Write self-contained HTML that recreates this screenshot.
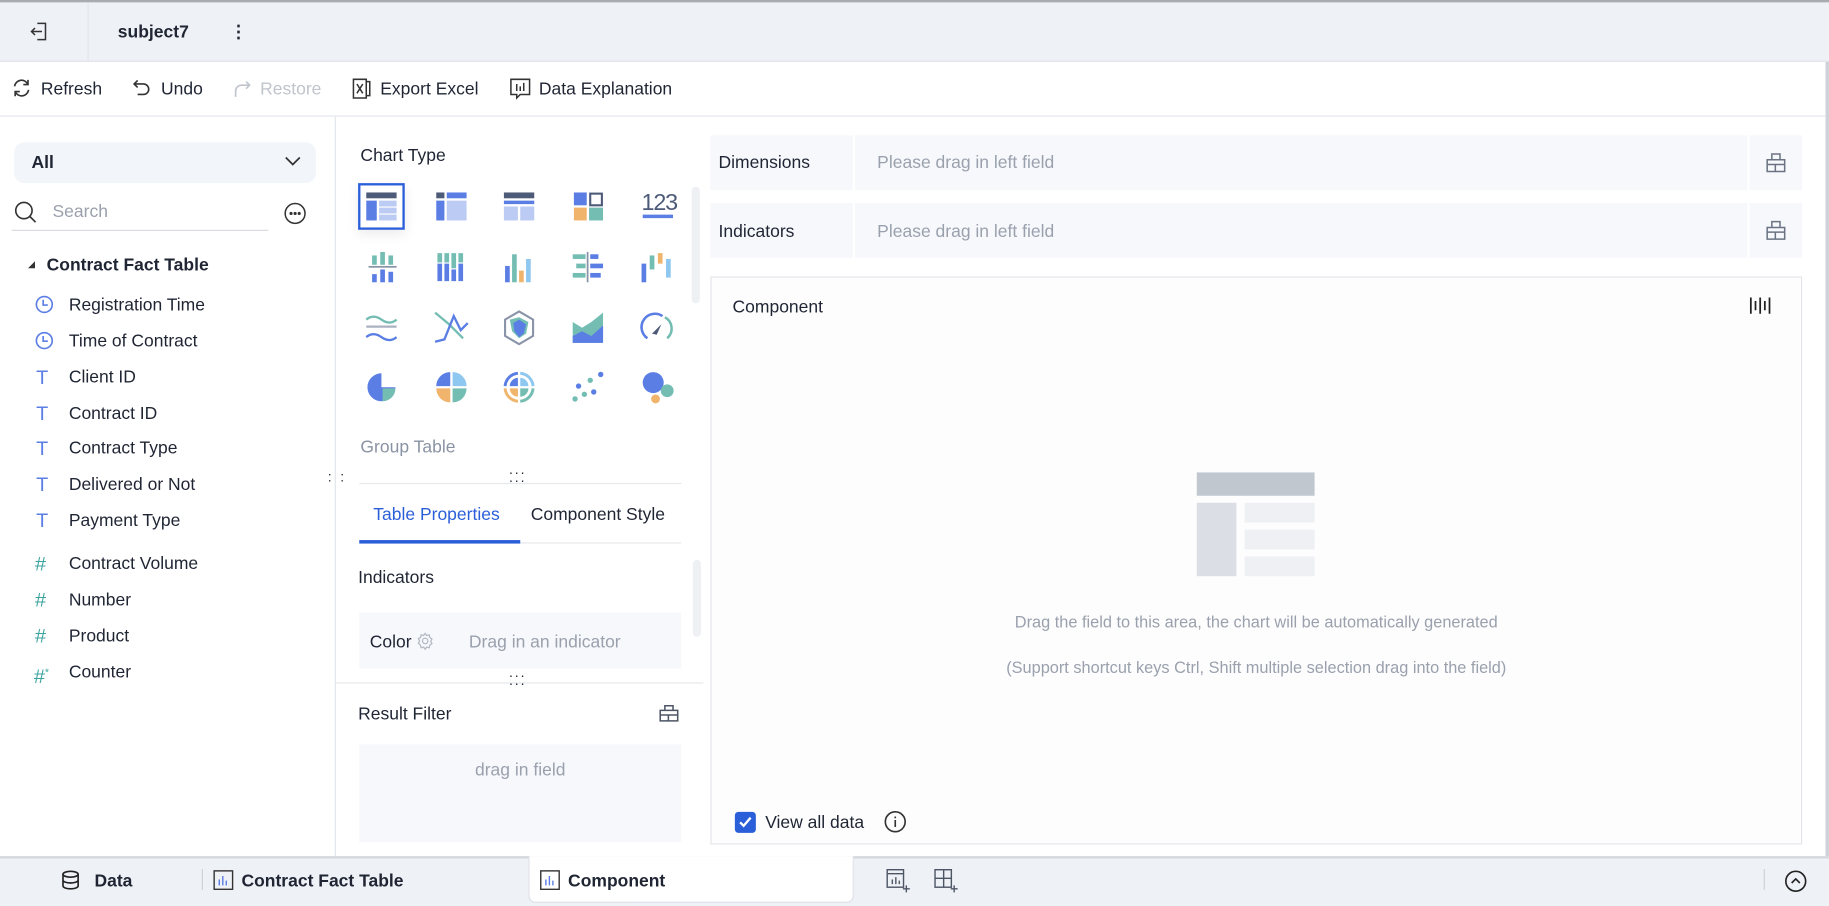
<!DOCTYPE html>
<html><head><meta charset="utf-8">
<style>
*{box-sizing:border-box;margin:0;padding:0}
html,body{width:1829px;height:906px;overflow:hidden;background:#fff}
#w{position:absolute;left:0;top:0;width:1568px;height:777px;transform:scale(1.16645);transform-origin:0 0;font-family:"Liberation Sans",sans-serif;color:#1f2533;font-size:15px}
.a{position:absolute}
.t{position:absolute;white-space:nowrap;line-height:18px;margin-top:1px}
.i{position:absolute;white-space:nowrap;line-height:18px;margin-top:1px}
.g{color:#9aa1ad}
svg{position:absolute;overflow:visible}
</style></head><body><div id="w">
<div class="a" style="left:0;top:0;width:1568px;height:53px;background:#eef1f6;border-top:2px solid #a9abb0;border-bottom:1px solid #e0e3e8"></div>
<div class="a" style="left:75px;top:2px;width:1px;height:51px;background:#e2e5ea"></div>
<svg style="left:25px;top:18px" width="18" height="18" viewBox="0 0 18 18" fill="none" stroke="#333" stroke-width="1.3"><path d="M7 2h7v14H7M11 9H2M5 6L2 9l3 3"/></svg>
<div class="t" style="left:101px;top:18px;font-weight:bold;font-size:15px">subject7</div>
<div class="t" style="left:197px;top:18px;font-weight:bold">⋮</div>
<div class="a" style="left:0;top:99px;width:1568px;height:1px;background:#e3e6eb"></div>
<svg style="left:10px;top:67px" width="17" height="17" viewBox="0 0 17 17" fill="none" stroke="#333" stroke-width="1.4"><path d="M2.5 7A6 6 0 0 1 14 5.5M14.5 10A6 6 0 0 1 3 11.5M14 1.5v4h-4M3 15.5v-4h4"/></svg>
<div class="t" style="left:35px;top:67px">Refresh</div>
<svg style="left:113px;top:67px" width="17" height="17" viewBox="0 0 17 17" fill="none" stroke="#333" stroke-width="1.4"><path d="M5 2L2 5l3 3M2 5h8a4.5 4.5 0 0 1 0 9H5"/></svg>
<div class="t" style="left:138px;top:67px">Undo</div>
<svg style="left:199px;top:68px" width="17" height="17" viewBox="0 0 17 17" fill="none" stroke="#c0c4cc" stroke-width="1.4"><path d="M12 2l3 3-3 3M15 5H8a5 5 0 0 0-5 5v5"/></svg>
<div class="t" style="left:223px;top:67px;color:#c0c4cc">Restore</div>
<svg style="left:302px;top:67px" width="17" height="18" viewBox="0 0 17 18" fill="none" stroke="#333" stroke-width="1.3"><path d="M1 1h11v16H1zM12 3h3v12h-3M4 5l5 8M9 5l-5 8"/></svg>
<div class="t" style="left:326px;top:67px">Export Excel</div>
<svg style="left:437px;top:67px" width="18" height="19" viewBox="0 0 18 19" fill="none" stroke="#333" stroke-width="1.3"><path d="M1 1h16v13H9l-3 3v-3H1zM6 5v6M9 7v4M12 4v7"/></svg>
<div class="t" style="left:462px;top:67px">Data Explanation</div>
<div class="a" style="left:1565px;top:53px;width:3px;height:682px;background:#cfd2d8"></div>
<div class="a" style="left:287px;top:100px;width:1px;height:634px;background:#e3e6eb"></div>
<div class="a" style="left:12px;top:122px;width:259px;height:35px;background:#f2f5fa;border-radius:9px"></div>
<div class="t" style="left:27px;top:130px;font-weight:bold">All</div>
<svg style="left:244px;top:134px" width="14" height="9" viewBox="0 0 14 9" fill="none" stroke="#333" stroke-width="1.5"><path d="M1 1l6 6 6-6"/></svg>
<svg style="left:12px;top:172px" width="20" height="20" viewBox="0 0 20 20" fill="none" stroke="#333" stroke-width="1.4"><circle cx="8.5" cy="8.5" r="7"/><path d="M13.5 13.5l5 5"/></svg>
<div class="t g" style="left:45px;top:172px">Search</div>
<div class="a" style="left:10px;top:197px;width:220px;height:1px;background:#d8dbe1"></div>
<svg style="left:243px;top:173px" width="20" height="20" viewBox="0 0 20 20" fill="none" stroke="#333" stroke-width="1.3"><circle cx="10" cy="10" r="8.5"/><circle cx="6.5" cy="10" r=".7" fill="#333"/><circle cx="10" cy="10" r=".7" fill="#333"/><circle cx="13.5" cy="10" r=".7" fill="#333"/></svg>
<svg style="left:24px;top:223px" width="7" height="7" viewBox="0 0 7 7"><path d="M0 7L6 1v6z" fill="#333"/></svg>
<div class="t" style="left:40px;top:218px;font-weight:bold">Contract Fact Table</div>
<svg style="left:30px;top:253px" width="16" height="16" viewBox="0 0 16 16" fill="none" stroke="#5b7ee5" stroke-width="1.4"><circle cx="8" cy="8" r="6.8"/><path d="M7 4v4.5h4"/></svg>
<div class="t" style="left:59px;top:252px">Registration Time</div>
<svg style="left:30px;top:284px" width="16" height="16" viewBox="0 0 16 16" fill="none" stroke="#5b7ee5" stroke-width="1.4"><circle cx="8" cy="8" r="6.8"/><path d="M7 4v4.5h4"/></svg>
<div class="t" style="left:59px;top:283px">Time of Contract</div>
<div class="i" style="left:31px;top:314px;color:#5b7ee5;font-size:17px">T</div><div class="t" style="left:59px;top:314px">Client ID</div>
<div class="i" style="left:31px;top:345px;color:#5b7ee5;font-size:17px">T</div><div class="t" style="left:59px;top:345px">Contract ID</div>
<div class="i" style="left:31px;top:375px;color:#5b7ee5;font-size:17px">T</div><div class="t" style="left:59px;top:375px">Contract Type</div>
<div class="i" style="left:31px;top:406px;color:#5b7ee5;font-size:17px">T</div><div class="t" style="left:59px;top:406px">Delivered or Not</div>
<div class="i" style="left:31px;top:437px;color:#5b7ee5;font-size:17px">T</div><div class="t" style="left:59px;top:437px">Payment Type</div>
<div class="i" style="left:30px;top:474px;color:#3aa3a0;font-size:17px">#</div><div class="t" style="left:59px;top:474px">Contract Volume</div>
<div class="i" style="left:30px;top:505px;color:#3aa3a0;font-size:17px">#</div><div class="t" style="left:59px;top:505px">Number</div>
<div class="i" style="left:30px;top:536px;color:#3aa3a0;font-size:17px">#</div><div class="t" style="left:59px;top:536px">Product</div>
<div class="i" style="left:29px;top:566px;color:#3aa3a0;font-size:17px">#<sup style="font-size:9px">*</sup></div><div class="t" style="left:59px;top:567px">Counter</div>
<div class="t" style="left:281px;top:404px;font-size:12px;letter-spacing:2px;line-height:8px">: :</div>
<div class="t" style="left:309px;top:124px">Chart Type</div>
<div class="a" style="left:593px;top:160px;width:7px;height:100px;background:#eef0f3;border-radius:4px"></div>
<div class="a" style="left:307px;top:157px;width:40px;height:40px;border:2px solid #2b5fd9;box-shadow:0 4px 10px rgba(0,0,0,.08)"></div>
<svg style="left:314px;top:165px" width="26" height="24"><rect x="0" y="0" width="26" height="5" fill="#4d5b78"/><rect x="0" y="7" width="9" height="17" fill="#5b7ee5"/><rect x="11" y="7" width="15" height="5" fill="#bccbf3"/><rect x="11" y="13" width="15" height="5" fill="#bccbf3"/><rect x="11" y="19" width="15" height="5" fill="#bccbf3"/></svg>
<svg style="left:374px;top:165px" width="26" height="24"><rect x="0" y="0" width="7" height="5" fill="#4d5b78"/><rect x="9" y="0" width="17" height="5" fill="#5b7ee5"/><rect x="0" y="7" width="7" height="17" fill="#5b7ee5"/><rect x="9" y="7" width="17" height="17" fill="#bccbf3"/></svg>
<svg style="left:432px;top:165px" width="26" height="24"><rect x="0" y="0" width="26" height="5" fill="#4d5b78"/><rect x="0" y="7" width="26" height="3" fill="#5b7ee5"/><rect x="0" y="12" width="12" height="12" fill="#bccbf3"/><rect x="14" y="12" width="12" height="12" fill="#bccbf3"/></svg>
<svg style="left:492px;top:165px" width="26" height="24"><rect x="0" y="0" width="11" height="11" fill="#5b7ee5"/><rect x="14" y="1" width="10" height="10" fill="none" stroke="#4d5b78" stroke-width="1.8"/><rect x="0" y="13" width="11" height="11" fill="#f0b46c"/><rect x="13" y="13" width="12" height="11" fill="#74bdb3"/></svg>
<div class="t" style="left:550px;top:164px;font-size:20px;color:#4d5b78;letter-spacing:-1px">123</div>
<div class="a" style="left:551px;top:184px;width:26px;height:3px;background:#5b7ee5"></div>
<svg style="left:316px;top:216px" width="24" height="26"><rect x="3" y="3" width="4" height="8" fill="#74bdb3"/><rect x="10" y="0" width="4" height="11" fill="#74bdb3"/><rect x="17" y="3" width="4" height="8" fill="#74bdb3"/><rect x="0" y="12" width="24" height="1.5" fill="#8a94a8"/><rect x="3" y="19" width="4" height="7" fill="#5b7ee5"/><rect x="10" y="15" width="4" height="11" fill="#5b7ee5"/><rect x="17" y="17" width="4" height="9" fill="#5b7ee5"/></svg>
<svg style="left:375px;top:217px" width="24" height="24"><g fill="#5b7ee5"><rect x="0" y="9" width="4" height="15"/><rect x="6" y="9" width="4" height="15"/><rect x="12" y="14" width="4" height="10"/><rect x="18" y="9" width="4" height="15"/></g><g fill="#74bdb3"><rect x="0" y="0" width="4" height="8"/><rect x="6" y="0" width="4" height="8"/><rect x="12" y="0" width="4" height="13"/><rect x="18" y="0" width="4" height="8"/></g></svg>
<svg style="left:433px;top:218px" width="24" height="24"><rect x="0" y="10" width="4" height="14" fill="#5b7ee5"/><rect x="6" y="0" width="4" height="24" fill="#74bdb3"/><rect x="12" y="14" width="4" height="10" fill="#f0b46c"/><rect x="18" y="4" width="4" height="20" fill="#8ec7ef"/></svg>
<svg style="left:491px;top:216px" width="26" height="26"><rect x="0" y="2" width="11" height="4" fill="#74bdb3"/><rect x="3" y="10" width="8" height="4" fill="#74bdb3"/><rect x="0" y="18" width="11" height="4" fill="#74bdb3"/><rect x="12" y="0" width="1.5" height="26" fill="#8a94a8"/><rect x="15" y="2" width="7" height="4" fill="#5b7ee5"/><rect x="15" y="10" width="11" height="4" fill="#5b7ee5"/><rect x="15" y="18" width="9" height="4" fill="#5b7ee5"/></svg>
<svg style="left:550px;top:217px" width="26" height="26"><rect x="0" y="9" width="4" height="16" fill="#5b7ee5"/><rect x="7" y="2" width="4" height="12" fill="#74bdb3"/><rect x="14" y="0" width="4" height="9" fill="#f0b46c"/><rect x="21" y="5" width="4" height="16" fill="#8ec7ef"/></svg>
<svg style="left:314px;top:268px" width="26" height="24" fill="none" stroke-width="2"><path d="M0 6q6-5 13 0t13 0" stroke="#74bdb3"/><path d="M0 12h26" stroke="#aab2c2"/><path d="M0 21q6-5 13 0t13 0" stroke="#5b7ee5"/></svg>
<svg style="left:373px;top:268px" width="28" height="26" fill="none" stroke-width="2"><path d="M0 0l12 10 12 12" stroke="#74bdb3"/><path d="M0 25l8-2 8-20 6 12 6-6" stroke="#5b7ee5"/></svg>
<svg style="left:431px;top:266px" width="28" height="30"><path d="M14 1l12 7v14l-12 7-12-7V8z" fill="none" stroke="#8a94a8" stroke-width="1.8"/><path d="M14 6l8 4-2 10-6 4-6-6-2-10z" fill="#74bdb3"/><path d="M14 8l6 4-2 8-4 3-4-5-1-7z" fill="#5b7ee5"/></svg>
<svg style="left:491px;top:268px" width="26" height="26"><path d="M0 8l8 5 8-5 10-8v26H0z" fill="#74bdb3"/><path d="M0 20l8-4 8 4 10-9v15H0z" fill="#5b7ee5"/></svg>
<svg style="left:550px;top:268px" width="26" height="26" fill="none" stroke-width="2.2"><path d="M5 22A11 11 0 0 1 18 3" stroke="#5b7ee5"/><path d="M20 4A11 11 0 0 1 22 22" stroke="#74bdb3"/><path d="M9 18l8-8-4 9z" fill="#4d5b78"/></svg>
<svg style="left:314px;top:319px" width="26" height="26"><path d="M13 13V1A12 12 0 1 0 25 13z" fill="#5b7ee5"/><path d="M14 14h11a11 11 0 0 1-11 11z" fill="#74bdb3"/></svg>
<svg style="left:374px;top:319px" width="26" height="26"><path d="M12 0v12H0A12 12 0 0 1 12 0z" fill="#5b7ee5"/><path d="M14 0a12 12 0 0 1 12 12H14z" fill="#8ec7ef"/><path d="M12 14v12A12 12 0 0 1 0 14z" fill="#f0b46c"/><path d="M14 14h12a12 12 0 0 1-12 12z" fill="#74bdb3"/></svg>
<svg style="left:432px;top:319px" width="26" height="26" fill="none" stroke-width="2.5"><path d="M12 1A12 12 0 0 0 1 12" stroke="#5b7ee5"/><path d="M14 1a12 12 0 0 1 11 11" stroke="#8ec7ef"/><path d="M1 14a12 12 0 0 0 11 11" stroke="#f0b46c"/><path d="M14 25a12 12 0 0 0 11-11" stroke="#74bdb3"/><path d="M12 5v7H5a7 7 0 0 1 7-7z" fill="#5b7ee5" stroke="none"/><path d="M14 5a7 7 0 0 1 7 7h-7z" fill="#8ec7ef" stroke="none"/><path d="M12 14v7a7 7 0 0 1-7-7z" fill="#f0b46c" stroke="none"/><path d="M14 14h7a7 7 0 0 1-7 7z" fill="#74bdb3" stroke="none"/></svg>
<svg style="left:491px;top:319px" width="26" height="26"><g fill="#5b7ee5"><circle cx="24" cy="2" r="2.3"/><circle cx="5" cy="12" r="2.3"/><circle cx="18" cy="17" r="2.3"/></g><g fill="#74bdb3"><circle cx="15" cy="7" r="2.3"/><circle cx="10" cy="19" r="2.3"/><circle cx="2" cy="23" r="2.3"/></g></svg>
<svg style="left:550px;top:318px" width="28" height="28"><circle cx="10" cy="10" r="9" fill="#5b7ee5"/><circle cx="22" cy="17" r="5.5" fill="#74bdb3"/><circle cx="12" cy="24" r="3.8" fill="#f0b46c"/></svg>
<div class="t" style="left:309px;top:374px;color:#8a93a3">Group Table</div>
<div class="a" style="left:308px;top:414px;width:276px;height:1px;background:#e5e7eb"></div>
<div class="t" style="left:436px;top:401px;font-size:12px;letter-spacing:1px;line-height:7px">&middot;&middot;&middot;<br>&middot;&middot;&middot;</div>
<div class="t" style="left:320px;top:432px;color:#2b5fd9">Table Properties</div>
<div class="t" style="left:455px;top:432px">Component Style</div>
<div class="a" style="left:308px;top:465px;width:276px;height:1px;background:#e5e7eb"></div>
<div class="a" style="left:308px;top:463px;width:138px;height:3px;background:#2b5fd9"></div>
<div class="t" style="left:307px;top:486px">Indicators</div>
<div class="a" style="left:594px;top:480px;width:7px;height:66px;background:#eef0f3;border-radius:4px"></div>
<div class="a" style="left:308px;top:525px;width:276px;height:48px;background:#f6f8fc"></div>
<div class="t" style="left:317px;top:541px">Color</div>
<svg style="left:357px;top:542px" width="15" height="15" viewBox="0 0 15 15" fill="none" stroke="#b5bac4" stroke-width="1.1"><circle cx="7.5" cy="7.5" r="2.3"/><path d="M7.5 1l1.3 1.8 2.2-.5.5 2.2 1.8 1.3-1 2 1 2-1.8 1.3-.5 2.2-2.2-.5-1.3 1.8-1.3-1.8-2.2.5-.5-2.2L1.7 9.5l1-2-1-2L3.5 4.5 4 2.3l2.2.5z"/></svg>
<div class="t g" style="left:402px;top:541px">Drag in an indicator</div>
<div class="a" style="left:288px;top:585px;width:315px;height:1px;background:#e5e7eb"></div>
<div class="t" style="left:436px;top:575px;font-size:12px;letter-spacing:1px;line-height:7px">&middot;&middot;&middot;<br>&middot;&middot;&middot;</div>
<div class="t" style="left:307px;top:603px">Result Filter</div>
<svg style="left:565px;top:604px" width="17" height="15" viewBox="0 0 17 15" fill="none" stroke="#4d5565" stroke-width="1.3"><path d="M1 5h15v9H1zM5 5V1h7v4M1 9h15M8 9v5"/></svg>
<div class="a" style="left:308px;top:638px;width:276px;height:84px;background:#f6f8fc"></div>
<div class="t g" style="left:308px;top:651px;width:276px;text-align:center">drag in field</div>
<div class="a" style="left:609px;top:116px;width:936px;height:47px;background:#f6f8fc"></div>
<div class="a" style="left:731px;top:116px;width:2px;height:47px;background:#fff"></div>
<div class="a" style="left:1498px;top:116px;width:2px;height:47px;background:#fff"></div>
<div class="t" style="left:616px;top:130px">Dimensions</div>
<div class="t g" style="left:752px;top:130px">Please drag in left field</div>
<svg style="left:1514px;top:131px" width="17" height="17" viewBox="0 0 17 17" fill="none" stroke="#6b7383" stroke-width="1.3"><path d="M1 6h15v10H1zM5 6V1h7v5M1 10h15M8 10v6"/></svg>
<div class="a" style="left:609px;top:174px;width:936px;height:47px;background:#f6f8fc"></div>
<div class="a" style="left:731px;top:174px;width:2px;height:47px;background:#fff"></div>
<div class="a" style="left:1498px;top:174px;width:2px;height:47px;background:#fff"></div>
<div class="t" style="left:616px;top:189px">Indicators</div>
<div class="t g" style="left:752px;top:189px">Please drag in left field</div>
<svg style="left:1514px;top:189px" width="17" height="17" viewBox="0 0 17 17" fill="none" stroke="#6b7383" stroke-width="1.3"><path d="M1 6h15v10H1zM5 6V1h7v5M1 10h15M8 10v6"/></svg>
<div class="a" style="left:609px;top:237px;width:936px;height:487px;border:1px solid #e3e5ea;background:#fdfdfe"></div>
<div class="t" style="left:628px;top:254px">Component</div>
<svg style="left:1500px;top:254px" width="18" height="16" viewBox="0 0 18 16" stroke="#222" stroke-width="1.5"><path d="M1 1v14M5 4v8M9 1v14M13 4v8M17 1v14"/></svg>
<div class="a" style="left:1026px;top:405px;width:101px;height:20px;background:#c1c7cf"></div>
<div class="a" style="left:1026px;top:431px;width:34px;height:63px;background:#dbdfe5"></div>
<div class="a" style="left:1067px;top:431px;width:60px;height:17px;background:#eef0f4"></div>
<div class="a" style="left:1067px;top:454px;width:60px;height:17px;background:#eef0f4"></div>
<div class="a" style="left:1067px;top:477px;width:60px;height:17px;background:#eef0f4"></div>
<div class="t" style="left:609px;top:523px;width:936px;text-align:center;color:#9aa1ad;font-size:14px">Drag the field to this area, the chart will be automatically generated</div>
<div class="t" style="left:609px;top:562px;width:936px;text-align:center;color:#9aa1ad;font-size:14px">(Support shortcut keys Ctrl, Shift multiple selection drag into the field)</div>
<div class="a" style="left:630px;top:696px;width:18px;height:18px;background:#2b5fd9;border-radius:3px"></div>
<svg style="left:633px;top:699px" width="12" height="12" viewBox="0 0 12 12" fill="none" stroke="#fff" stroke-width="2"><path d="M1.5 6l3 3 6-7"/></svg>
<div class="t" style="left:656px;top:696px">View all data</div>
<svg style="left:758px;top:695px" width="19" height="19" viewBox="0 0 19 19" fill="none" stroke="#333" stroke-width="1.4"><circle cx="9.5" cy="9.5" r="8.5"/><path d="M9.5 8v6M9.5 5v1.5"/></svg>
<div class="a" style="left:0;top:734px;width:1568px;height:43px;background:#eef1f6;border-top:2px solid #d4d8de"></div>
<div class="a" style="left:453px;top:734px;width:279px;height:40px;background:#fff;border-radius:0 0 6px 6px;border:1px solid #dde0e6;border-top:none"></div>
<svg style="left:53px;top:746px" width="15" height="17" viewBox="0 0 15 17" fill="none" stroke="#222" stroke-width="1.4"><ellipse cx="7.5" cy="3.5" rx="6.5" ry="2.5"/><path d="M1 3.5v10c0 1.4 2.9 2.5 6.5 2.5s6.5-1.1 6.5-2.5v-10M1 8.5c0 1.4 2.9 2.5 6.5 2.5s6.5-1.1 6.5-2.5"/></svg>
<div class="t" style="left:81px;top:746px;font-weight:bold">Data</div>
<div class="a" style="left:173px;top:745px;width:1px;height:18px;background:#cdd1d8"></div>
<svg style="left:183px;top:746px" width="17" height="17" viewBox="0 0 17 17" fill="none" stroke="#333" stroke-width="1.2"><rect x=".6" y=".6" width="15.8" height="15.8"/><path d="M5 13V8M8 13V5M11 13V9" stroke="#5b7ee5"/></svg>
<div class="t" style="left:207px;top:746px;font-weight:bold">Contract Fact Table</div>
<svg style="left:463px;top:746px" width="17" height="17" viewBox="0 0 17 17" fill="none" stroke="#333" stroke-width="1.2"><rect x=".6" y=".6" width="15.8" height="15.8"/><path d="M5 13V8M8 13V5M11 13V9" stroke="#5b7ee5"/></svg>
<div class="t" style="left:487px;top:746px;font-weight:bold">Component</div>
<svg style="left:760px;top:745px" width="20" height="20" viewBox="0 0 20 20" fill="none" stroke="#4d5565" stroke-width="1.2"><rect x=".6" y=".6" width="14" height="15"/><path d="M1 4h14M5 13V9M8 13V7M11 13V10M17 14v6M14 17h6"/></svg>
<svg style="left:801px;top:745px" width="20" height="20" viewBox="0 0 20 20" fill="none" stroke="#4d5565" stroke-width="1.2"><rect x=".6" y=".6" width="14" height="15"/><path d="M1 8h14M8 1v15M17 14v6M14 17h6"/></svg>
<div class="a" style="left:1512px;top:745px;width:1px;height:18px;background:#cdd1d8"></div>
<svg style="left:1530px;top:746px" width="19" height="19" viewBox="0 0 19 19" fill="none" stroke="#222" stroke-width="1.4"><circle cx="9.5" cy="9.5" r="8.5"/><path d="M6 11l3.5-3.5L13 11"/></svg>
</div></body></html>
